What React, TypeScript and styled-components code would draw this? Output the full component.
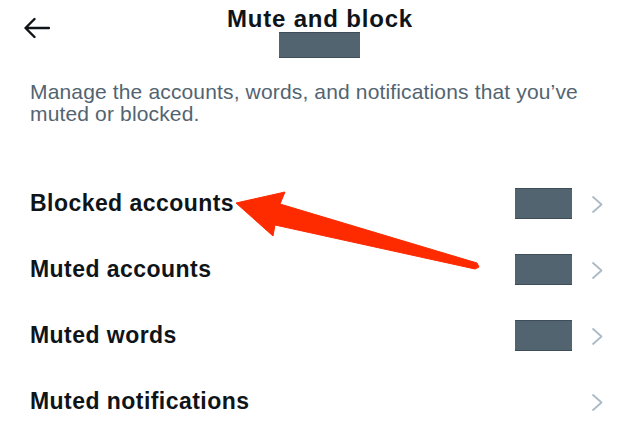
import styled, { createGlobalStyle } from "styled-components";

const GlobalStyle = createGlobalStyle`
    html, body {
        margin: 0;
        padding: 0;
        background: #ffffff;
    }
    body {
        font-family: "Liberation Sans", Arial, sans-serif;
        color: #0f1419;
    }
`;

const Screen = styled.div`
    position: relative;
    width: 640px;
    height: 422px;
    overflow: hidden;
    background: #ffffff;
`;

const Header = styled.header`
    display: grid;
    grid-template-columns: 1fr auto 1fr;
    align-items: start;
`;

const BackButton = styled.button`
    justify-self: start;
    display: flex;
    align-items: center;
    justify-content: center;
    margin: 17px 0 0 23px;
    padding: 0;
    border: none;
    background: none;
    color: #0f1419;
`;

const TitleBlock = styled.div`
    display: flex;
    flex-direction: column;
    align-items: center;
    padding-top: 5px;
`;

const Title = styled.h1`
    margin: 0;
    font-size: 24px;
    line-height: 27px;
    font-weight: 700;
    letter-spacing: 0.8px;
    color: #0f1419;
`;

const Redacted = styled.div<{ $w: number; $h: number; $hidden?: boolean }>`
    width: ${(p) => p.$w}px;
    height: ${(p) => p.$h}px;
    box-sizing: border-box;
    background: #536471;
    border-top: 1px solid #3e4d58;
    border-bottom: 1px solid #3e4d58;
    visibility: ${(p) => (p.$hidden ? "hidden" : "visible")};
`;

const Description = styled.p`
    margin: 23px 0 0;
    padding: 0 40px 0 30px;
    font-size: 21px;
    line-height: 22px;
    letter-spacing: 0.15px;
    color: #536471;
`;

const List = styled.ul`
    list-style: none;
    margin: 45px 0 0;
    padding: 0;
`;

const Row = styled.li`
    display: flex;
    align-items: center;
    height: 66px;
    padding: 0 37px 0 30px;
`;

const Label = styled.span`
    flex: 1;
    font-size: 23px;
    font-weight: 700;
    letter-spacing: 0.45px;
    color: #0f1419;
`;

const Chevron = styled.svg`
    margin-left: 19px;
    margin-top: 2px;
`;

const Annotation = styled.svg`
    position: absolute;
    top: 0;
    left: 0;
    pointer-events: none;
`;

const rows = [
    { label: "Blocked accounts", redacted: true },
    { label: "Muted accounts", redacted: true },
    { label: "Muted words", redacted: true },
    { label: "Muted notifications", redacted: false },
];

export default function App() {
    return (
        <Screen>
            <GlobalStyle />
            <Header>
                <BackButton aria-label="Back">
                    <svg width="27" height="22" viewBox="0 0 27 22">
                        <path
                            d="M26 11H3M11.5 2L2.5 11L11.5 20"
                            fill="none"
                            stroke="currentColor"
                            strokeWidth="2.4"
                            strokeLinecap="round"
                            strokeLinejoin="round"
                        />
                    </svg>
                </BackButton>
                <TitleBlock>
                    <Title>Mute and block</Title>
                    <Redacted $w={81} $h={26} />
                </TitleBlock>
                <div />
            </Header>

            <Description>
                Manage the accounts, words, and notifications that you’ve muted or blocked.
            </Description>

            <List>
                {rows.map((r) => (
                    <Row key={r.label}>
                        <Label>{r.label}</Label>
                        <Redacted $w={57} $h={31} $hidden={!r.redacted} />
                        <Chevron width="12" height="19" viewBox="0 0 12 19">
                            <polyline
                                points="1.5,1.5 10.5,9.5 1.5,17.5"
                                fill="none"
                                stroke="#a9b9c6"
                                strokeWidth="1.7"
                                strokeLinejoin="round"
                            />
                        </Chevron>
                    </Row>
                ))}
            </List>

            {/* red callout arrow drawn over the screenshot */}
            <Annotation width="640" height="422" viewBox="0 0 640 422">
                <polygon
                    points="236,203 285,192 280,204 477,263 479,267 475,269 275,225 273,236"
                    fill="#fe2a00"
                    stroke="#fe2a00"
                    strokeWidth="1"
                    strokeLinejoin="round"
                />
            </Annotation>
        </Screen>
    );
}
